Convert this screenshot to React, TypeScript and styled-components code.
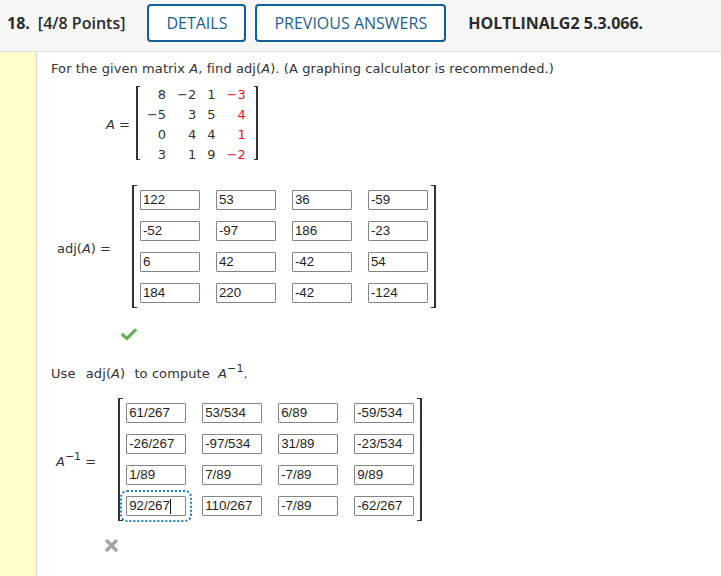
import React from "react";
import styled, { createGlobalStyle } from "styled-components";

const Global = createGlobalStyle`
  html, body { margin: 0; padding: 0; background: #fff; }
  body { font-family: "DejaVu Sans", Verdana, sans-serif; color: #333; }
`;

const Page = styled.div`
  width: 721px;
  height: 576px;
  display: flex;
  flex-direction: column;
  overflow: hidden;
`;

const Header = styled.header`
  flex: none;
  height: 52px;
  box-sizing: border-box;
  display: flex;
  align-items: center;
  padding: 0 0 6px 7px;
  background: #f6f6f6;
  border-bottom: 1px solid #dedede;
  font-family: "Open Sans", sans-serif;
  color: #2b2b2b;
`;

const QNum = styled.span`
  font-size: 16px;
  font-weight: 700;
`;

const Points = styled.span`
  font-size: 16px;
  font-weight: 600;
  margin-left: 8px;
`;

const Buttons = styled.div`
  display: flex;
  gap: 9px;
  margin-left: 22px;
`;

const HeadButton = styled.button`
  height: 38px;
  padding: 0 17px;
  box-sizing: border-box;
  border: 2px solid #125e96;
  border-radius: 4px;
  background: #fff;
  color: #1b5f94;
  font-family: "Open Sans", sans-serif;
  font-size: 16px;
  font-weight: 400;
  cursor: pointer;
`;

const Code = styled.span`
  margin-left: 22px;
  font-size: 16px;
  font-weight: 700;
`;

const Main = styled.div`
  flex: 1;
  display: flex;
`;

const Side = styled.div`
  flex: none;
  width: 36px;
  background: #ffffcc;
  border-right: 1px solid #d4d4d4;
`;

const Content = styled.div`
  flex: 1;
  padding: 8px 0 0 14px;
  font-size: 13px;
  line-height: 18px;
  color: #333;
  letter-spacing: 0.09px;
`;

const Para = styled.p<{ $mt?: number }>`
  margin: ${(p) => p.$mt ?? 0}px 0 0;
`;

const Var = styled.i`
  font-style: italic;
`;

const Sup = styled.sup`
  font-size: 11px;
  line-height: 0;
  vertical-align: 0;
  position: relative;
  top: -6px;
`;

const Gap = styled.span<{ $w: number }>`
  display: inline-block;
  width: ${(p) => p.$w}px;
`;

const MathRow = styled.div<{ $indent: number; $gap: number; $mt: number }>`
  display: flex;
  align-items: center;
  gap: ${(p) => p.$gap}px;
  margin: ${(p) => p.$mt}px 0 0 ${(p) => p.$indent}px;
  letter-spacing: 0;
`;

const Label = styled.span<{ $dy?: number }>`
  white-space: nowrap;
  position: relative;
  top: ${(p) => p.$dy ?? 0}px;
`;

const Matrix = styled.div`
  display: flex;
  align-items: stretch;
`;

const Bracket = styled.div<{ $side: "left" | "right"; $w: number; $mt?: number; $mb?: number }>`
  width: ${(p) => p.$w}px;
  box-sizing: border-box;
  border-top: 1.5px solid #333;
  border-bottom: 1.5px solid #333;
  ${(p) => (p.$side === "left" ? "border-left: 2px solid #333;" : "border-right: 2px solid #333;")}
  margin: ${(p) => p.$mt ?? 0}px 0 ${(p) => p.$mb ?? 0}px;
`;

const NumGrid = styled.div`
  display: grid;
  grid-template-columns: repeat(4, auto);
  column-gap: 11px;
  justify-items: end;
  line-height: 20px;
  padding: 0 8px 0 7px;
`;

const Num = styled.span<{ $red?: boolean }>`
  color: ${(p) => (p.$red ? "#e8121c" : "#333")};
`;

const FieldGrid = styled.div`
  display: grid;
  grid-template-columns: repeat(4, 60px);
  column-gap: 16px;
  row-gap: 11px;
  padding: 5px 3px;
`;

const Field = styled.div<{ $focus?: boolean }>`
  width: 60px;
  height: 20px;
  box-sizing: border-box;
  border: 1px solid #858585;
  border-radius: 1px;
  padding: 0 2px;
  display: flex;
  align-items: center;
  font-family: "Liberation Sans", Arial, sans-serif;
  font-size: 13.33px;
  color: #1e1e1e;
  background: #fff;
  white-space: nowrap;
  overflow: hidden;
  ${(p) => (p.$focus ? "outline: 2px dotted #1a7fd8; outline-offset: 4px;" : "")}
`;

const Caret = styled.span`
  display: inline-block;
  width: 1px;
  height: 15px;
  background: #111;
  margin-left: 0.5px;
`;

const Mark = styled.div<{ $indent: number; $mt: number }>`
  margin: ${(p) => p.$mt}px 0 0 ${(p) => p.$indent}px;
  height: 12px;
  display: flex;
`;

const matrixA = [
  ["8", "\u22122", "1", "\u22123"],
  ["\u22125", "3", "5", "4"],
  ["0", "4", "4", "1"],
  ["3", "1", "9", "\u22122"],
];

const adj = [
  ["122", "53", "36", "-59"],
  ["-52", "-97", "186", "-23"],
  ["6", "42", "-42", "54"],
  ["184", "220", "-42", "-124"],
];

const inv = [
  ["61/267", "53/534", "6/89", "-59/534"],
  ["-26/267", "-97/534", "31/89", "-23/534"],
  ["1/89", "7/89", "-7/89", "9/89"],
  ["92/267", "110/267", "-7/89", "-62/267"],
];

function FieldMatrix({ data, focus }: { data: string[][]; focus?: [number, number] }) {
  return (
    <Matrix>
      <Bracket $side="left" $w={5} />
      <FieldGrid>
        {data.flatMap((row, r) =>
          row.map((v, c) => {
            const f = focus && focus[0] === r && focus[1] === c;
            return (
              <Field key={`${r}-${c}`} role="textbox" $focus={!!f}>
                {v}
                {f && <Caret />}
              </Field>
            );
          })
        )}
      </FieldGrid>
      <Bracket $side="right" $w={5} />
    </Matrix>
  );
}

export default function App() {
  return (
    <Page>
      <Global />
      <Header>
        <QNum>18.</QNum>
        <Points>[4/8 Points]</Points>
        <Buttons>
          <HeadButton>DETAILS</HeadButton>
          <HeadButton>PREVIOUS ANSWERS</HeadButton>
        </Buttons>
        <Code>HOLTLINALG2 5.3.066.</Code>
      </Header>
      <Main>
        <Side />
        <Content>
          <Para>
            For the given matrix <Var>A</Var>, find adj(<Var>A</Var>). (A graphing calculator is recommended.)
          </Para>
          <MathRow $indent={55} $gap={6} $mt={7}>
            <Label>
              <Var>A</Var> =
            </Label>
            <Matrix>
              <Bracket $side="left" $w={4} $mt={1} $mb={5} />
              <NumGrid>
                {matrixA.flatMap((row, r) =>
                  row.map((v, c) => (
                    <Num key={`${r}-${c}`} $red={c === 3}>
                      {v}
                    </Num>
                  ))
                )}
              </NumGrid>
              <Bracket $side="right" $w={4} $mt={1} $mb={5} />
            </Matrix>
          </MathRow>
          <MathRow $indent={6} $gap={21} $mt={20}>
            <Label $dy={2}>
              adj(<Var>A</Var>) =
            </Label>
            <FieldMatrix data={adj} />
          </MathRow>
          <Mark $indent={70} $mt={20}>
            <svg width="16" height="13" viewBox="0 0 16 13">
              <path d="M1.8 6.8 L5.8 10.6 L14.2 2.2" fill="none" stroke="#5fb24e" strokeWidth="3.2" strokeLinecap="round" strokeLinejoin="round" />
            </svg>
          </Mark>
          <Para $mt={25}>
            Use<Gap $w={6} /> adj(<Var>A</Var>)<Gap $w={5} /> to compute<Gap $w={4} /> <Var>A</Var>
            <Sup>{"\u22121"}</Sup>.
          </Para>
          <MathRow $indent={5} $gap={22} $mt={15}>
            <Label $dy={2}>
              <Var>A</Var>
              <Sup>{"\u22121"}</Sup> =
            </Label>
            <FieldMatrix data={inv} focus={[3, 0]} />
          </MathRow>
          <Mark $indent={54} $mt={18}>
            <svg width="13" height="13" viewBox="0 0 13 13">
              <path d="M2 2 L11 11 M11 2 L2 11" fill="none" stroke="#a3a3a3" strokeWidth="3.4" strokeLinecap="round" />
            </svg>
          </Mark>
        </Content>
      </Main>
    </Page>
  );
}
